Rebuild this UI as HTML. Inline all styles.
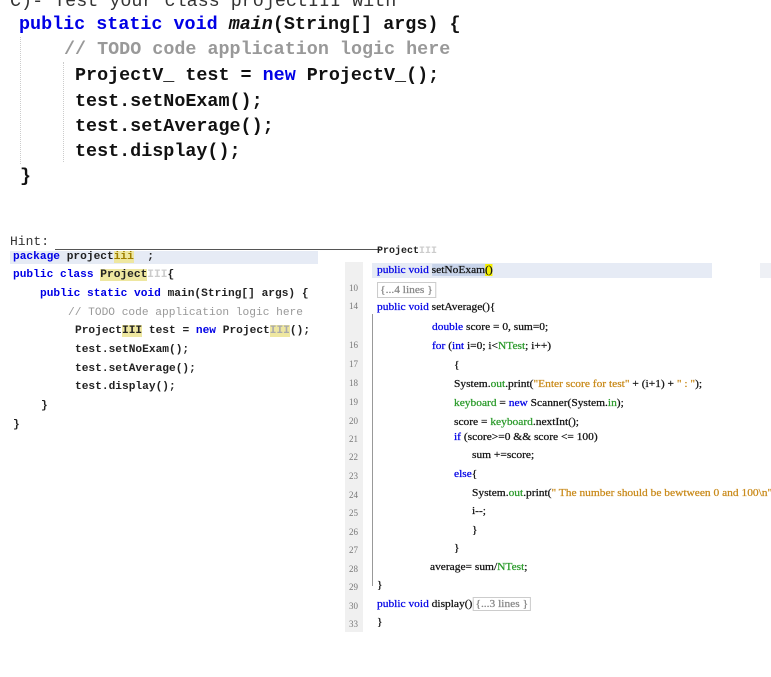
<!DOCTYPE html><html><head><style>
body{margin:0;width:771px;height:677px;background:#fff;overflow:hidden;position:relative;font-family:"Liberation Mono",monospace}
.t{position:absolute;white-space:pre;font-weight:bold;font-size:18.4px;line-height:20px;color:#111}
.k{color:#0000e6}.c{color:#999!important;font-weight:bold}
.h{position:absolute;white-space:pre;font-weight:bold;font-size:11.2px;line-height:14px;color:#222}
.r{position:absolute;white-space:pre;font-family:"Liberation Serif",serif;font-size:11px;line-height:14px;color:#111;transform:scaleX(1.04);transform-origin:left;-webkit-text-stroke:0.25px currentColor}
.n{position:absolute;left:349px;font-family:"Liberation Serif",serif;font-size:9px;color:#777}
.g{color:#2a9a2a}.o{color:#c98a1a}
</style></head><body>
<div class="t" style="left:10px;top:-8px;font-weight:normal;color:#333">C)- Test your class projectIII with</div>
<div class="t" style="left:19px;top:15px"><span class="k">public static void</span> <i>main</i>(String[] args) {</div>
<div class="t c" style="left:64px;top:40px">// TODO code application logic here</div>
<div class="t" style="left:75px;top:66px">ProjectV_ test = <span class="k">new</span> ProjectV_();</div>
<div class="t" style="left:75px;top:92px">test.setNoExam();</div>
<div class="t" style="left:75px;top:117px">test.setAverage();</div>
<div class="t" style="left:75px;top:142px">test.display();</div>
<div class="t" style="left:20px;top:167px">}</div>
<div style="position:absolute;left:20px;top:37px;height:127px;border-left:1px dotted #ccc"></div>
<div style="position:absolute;left:63px;top:62px;height:100px;border-left:1px dotted #ccc"></div>

<div style="position:absolute;left:10px;top:234px;font-size:13px;color:#333">Hint:</div>
<div style="position:absolute;left:55px;top:249px;width:325px;border-top:1px solid #555"></div>
<div style="position:absolute;left:10px;top:251px;width:308px;height:13px;background:#e6ebf5"></div>
<div class="h" style="left:13px;top:250px"><span class="k">package</span> project<span style="background:#eee7a0;color:#a08000">iii</span>  ;</div>
<div class="h" style="left:13px;top:268px"><span class="k">public class</span> <span style="background:#eee7a0">Project</span><span style="color:#ccc">III</span>{</div>
<div class="h" style="left:40px;top:287px"><span class="k">public static void</span> main(String[] args) {</div>
<div class="h c" style="left:68px;top:306px;font-weight:normal">// TODO code application logic here</div>
<div class="h" style="left:75px;top:324px">Project<span style="background:#eee7a0">III</span> test = <span class="k">new</span> Project<span style="background:#eee7a0;color:#aaa">III</span>();</div>
<div class="h" style="left:75px;top:343px">test.setNoExam();</div>
<div class="h" style="left:75px;top:362px">test.setAverage();</div>
<div class="h" style="left:75px;top:380px">test.display();</div>
<div class="h" style="left:41px;top:399px">}</div>
<div class="h" style="left:13px;top:418px">}</div>

<div style="position:absolute;left:345px;top:262px;width:18px;height:370px;background:#f0f0f0"></div>
<div class="h" style="left:377px;top:245px;font-size:10px">Project<span style="color:#ccc">III</span></div>
<div style="position:absolute;left:372px;top:263px;width:340px;height:15px;background:#e6ebf5"></div>
<div style="position:absolute;left:760px;top:263px;width:11px;height:15px;background:#eef0f5"></div>
<div class="n" style="top:283px">10</div><div class="n" style="top:301px">14</div><div class="n" style="top:340px">16</div><div class="n" style="top:359px">17</div><div class="n" style="top:378px">18</div><div class="n" style="top:397px">19</div><div class="n" style="top:416px">20</div><div class="n" style="top:434px">21</div><div class="n" style="top:452px">22</div><div class="n" style="top:471px">23</div><div class="n" style="top:490px">24</div><div class="n" style="top:508px">25</div><div class="n" style="top:527px">26</div><div class="n" style="top:545px">27</div><div class="n" style="top:564px">28</div><div class="n" style="top:582px">29</div><div class="n" style="top:601px">30</div><div class="n" style="top:619px">33</div>
<div style="position:absolute;left:372px;top:314px;height:272px;border-left:1px solid #999"></div>
<div class="r" style="left:377px;top:263px"><span class="k">public void</span> <span style="background:#c8d4ea">setNoExam</span><span style="background:#f5f000">()</span></div>
<div class="r" style="left:377px;top:282px;color:#888;border:1px solid #ccc;padding:0 2px">{...4 lines }</div>
<div class="r" style="left:377px;top:300px"><span class="k">public void</span> setAverage(){</div>
<div class="r" style="left:432px;top:320px"><span class="k">double</span> score = 0, sum=0;</div>
<div class="r" style="left:432px;top:339px"><span class="k">for</span> (<span class="k">int</span> i=0; i&lt;<span class="g">NTest</span>; i++)</div>
<div class="r" style="left:454px;top:358px">{</div>
<div class="r" style="left:454px;top:377px">System.<span class="g">out</span>.print(<span class="o">"Enter score for test"</span> + (i+1) + <span class="o">" : "</span>);</div>
<div class="r" style="left:454px;top:396px"><span class="g">keyboard</span> = <span class="k">new</span> Scanner(System.<span class="g">in</span>);</div>
<div class="r" style="left:454px;top:415px">score = <span class="g">keyboard</span>.nextInt();</div>
<div class="r" style="left:454px;top:430px"><span class="k">if</span> (score&gt;=0 &amp;&amp; score &lt;= 100)</div>
<div class="r" style="left:472px;top:448px">sum +=score;</div>
<div class="r" style="left:454px;top:467px"><span class="k">else</span>{</div>
<div class="r" style="left:472px;top:486px">System.<span class="g">out</span>.print(<span class="o">" The number should be bewtween 0 and 100\n"</span>);</div>
<div class="r" style="left:472px;top:504px">i--;</div>
<div class="r" style="left:472px;top:523px">}</div>
<div class="r" style="left:454px;top:541px">}</div>
<div class="r" style="left:430px;top:560px">average= sum/<span class="g">NTest</span>;</div>
<div class="r" style="left:377px;top:578px">}</div>
<div class="r" style="left:377px;top:597px"><span class="k">public void</span> display()<span style="color:#888;border:1px solid #ccc;padding:0 2px">{...3 lines }</span></div>
<div class="r" style="left:377px;top:615px">}</div>
</body></html>
